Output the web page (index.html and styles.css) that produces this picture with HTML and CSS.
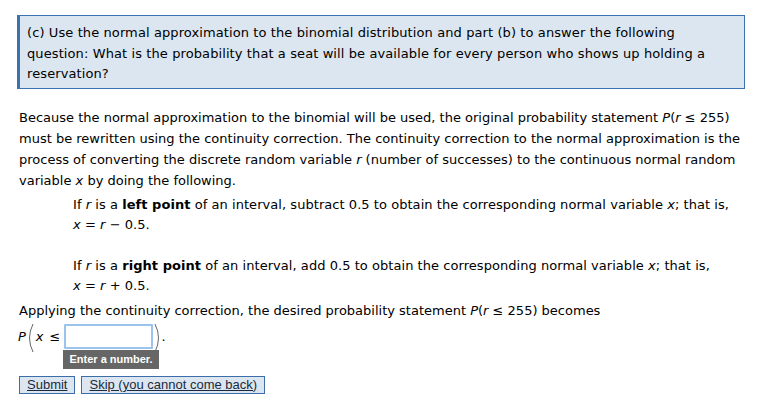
FILE: index.html
```html
<!DOCTYPE html>
<html>
<head>
<meta charset="utf-8">
<link rel="stylesheet" href="styles.css">
</head>
<body>
<div class="page">
  <div class="question">(c) Use the normal approximation to the binomial distribution and part (b) to answer the following question: What is the probability that a seat will be available for every person who shows up holding a reservation?</div>
  <p class="para">Because the normal approximation to the binomial will be used, the original probability statement <i>P</i>(<i>r</i> ≤ 255) must be rewritten using the continuity correction. The continuity correction to the normal approximation is the process of converting the discrete random variable <i>r</i> (number of successes) to the continuous normal random variable <i>x</i> by doing the following.</p>
  <div class="rule">If <i>r</i> is a <b>left point</b> of an interval, subtract 0.5 to obtain the corresponding normal variable <i>x</i>; that is,<br><i>x</i> = <i>r</i> − 0.5.</div>
  <div class="rule rule2">If <i>r</i> is a <b>right point</b> of an interval, add 0.5 to obtain the corresponding normal variable <i>x</i>; that is,<br><i>x</i> = <i>r</i> + 0.5.</div>
  <p class="apply">Applying the continuity correction, the desired probability statement <i>P</i>(<i>r</i> ≤ 255) becomes</p>
  <div class="answer">
    <i class="pvar">P</i><svg class="paren" width="8" height="30" viewBox="0 0 8 30"><path d="M7 1 Q0 15 7 29" fill="none" stroke="#666" stroke-width="1"/></svg><i class="xvar">x</i><span class="le">≤</span><span class="field"><span class="input"></span><span class="tip">Enter a number.</span></span><svg class="paren rparen" width="8" height="30" viewBox="0 0 8 30"><path d="M1 1 Q8 15 1 29" fill="none" stroke="#666" stroke-width="1"/></svg><span class="dot">.</span>
  </div>
  <div class="buttons">
    <span class="btn">Submit</span>
    <span class="btn">Skip (you cannot come back)</span>
  </div>
</div>
</body>
</html>
```
FILE: styles.css
```css
html, body { margin: 0; padding: 0; background: #fff; }
body { font-family: "DejaVu Sans", Verdana, sans-serif; font-size: 13px; color: #000; }
.page { padding: 15px 22px 0 17px; }
.question {
  background: #dce6f0;
  border: 1px solid #3b73b0;
  border-left: 3px solid #3b73b0;
  padding: 7px 8px 3px 7px;
  line-height: 20.5px;
  letter-spacing: 0.1px;
}
.para { margin: 18px 0 0 2px; line-height: 21px; }
.rule { margin: 4px 0 0 56px; line-height: 20px; letter-spacing: 0.05px; }
.rule2 { margin-top: 21px; }
.apply { margin: 5px 0 0 2px; line-height: 20px; }
.answer { display: flex; align-items: center; margin: 2px 0 0 1px; height: 28px; }
.paren { display: block; margin: 2px 1px 0 0; }
.xvar { margin-left: 1px; }
.le { margin-left: 6px; margin-right: 4px; }
.field { position: relative; display: block; }
.input { display: block; width: 85px; height: 21px; border: 2px solid #9cc3ec; background: #fff; border-radius: 1px; }
.tip {
  position: absolute; left: -1px; top: 26px;
  background: #666; color: #fff;
  font-family: "Liberation Sans", Arial, sans-serif; font-weight: bold; font-size: 11px;
  padding: 3px 6px 3px 6px; white-space: nowrap; line-height: 13px;
}
.rparen { margin: 2px 0 0 1px; }
.dot { margin-left: -1px; }
.buttons { display: flex; gap: 6px; margin: 25px 0 0 2px; }
.btn {
  font-family: "Liberation Sans", Arial, sans-serif; font-size: 13px;
  text-decoration: underline; color: #1a2a40;
  background: #dce6f0; border: 1px solid #3b6ea8;
  padding: 0 7px; line-height: 16px;
}
```
